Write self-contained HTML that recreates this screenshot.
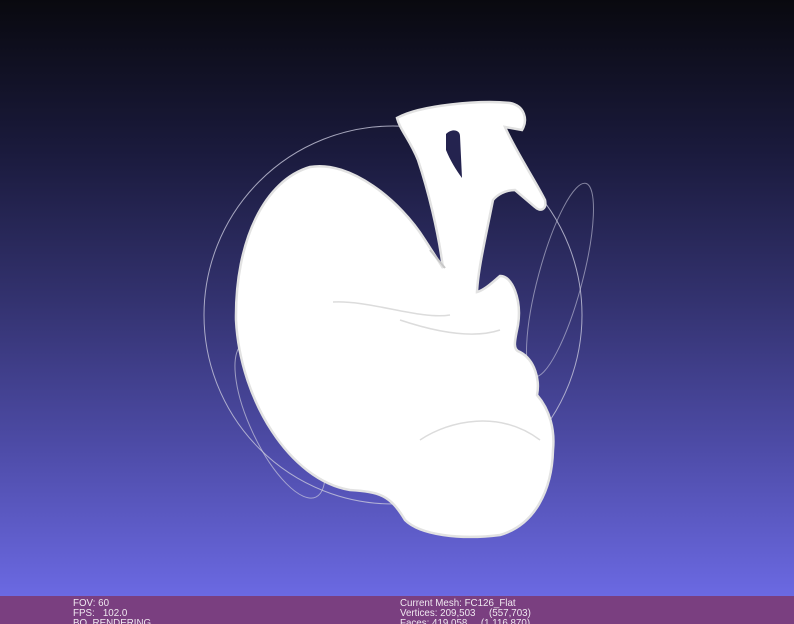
<!DOCTYPE html>
<html><head><style>
html,body{margin:0;padding:0;width:794px;height:624px;overflow:hidden;}
body{background:linear-gradient(to bottom,#09090f 0px,#1a1a3c 150px,#33326f 300px,#4e4ca8 450px,#6b69e2 596px);position:relative;font-family:"Liberation Sans",sans-serif;}
.bar{position:absolute;left:0;top:596px;width:794px;height:28px;background:#7a3f80;color:#f0e8f0;font-size:10.5px;line-height:10px;}
.c{position:absolute;top:2px;transform:scaleX(0.93);transform-origin:left;white-space:pre;}
</style></head><body>
<svg width="794" height="596" style="position:absolute;left:0;top:0">
<circle cx="393" cy="315" r="189" fill="none" stroke="#c8c8dc" stroke-width="1" opacity="0.8"/>
<ellipse cx="280" cy="420" rx="30" ry="85" transform="rotate(-25 280 420)" fill="none" stroke="#c8c8dc" stroke-width="1" opacity="0.7"/>
<ellipse cx="560" cy="280" rx="22" ry="100" transform="rotate(15 560 280)" fill="none" stroke="#c8c8dc" stroke-width="1" opacity="0.6"/>
<path d="M397,118 C420,105 480,100 510,103 C525,106 528,120 522,130 L505,127 C515,150 535,180 545,200 C547,210 540,212 535,207 L515,190 C505,190 497,195 493,200 C485,240 478,270 477,292 C485,290 495,280 500,276 C512,275 522,300 518,325 C515,340 512,350 520,352 C535,360 540,380 537,395 C550,410 555,430 553,450 C552,490 535,525 500,535 C460,540 420,535 405,520 C390,495 380,492 350,490 C290,480 240,400 236,320 C235,240 265,180 310,167 C350,160 400,200 425,240 L443,268 C438,230 428,190 418,160 C410,140 400,130 397,118 Z" fill="#ffffff" stroke="#e2e2e2" stroke-width="2.5"/>
<path d="M446,134 C452,128 460,130 460,136 L462,178 C456,170 450,160 446,150 Z" fill="#24234f"/>
<path d="M333,302 C370,300 420,320 450,315 M400,320 C430,330 470,340 500,330 M420,440 C450,420 500,410 540,440" fill="none" stroke="#dcdcdc" stroke-width="1.5"/>
<path d="M430,250 L445,268" stroke="#c8c8c8" stroke-width="2"/>
</svg>
<div class="bar">
<div class="c" style="left:73px">FOV: 60
FPS:   102.0
BO_RENDERING</div>
<div class="c" style="left:400px">Current Mesh: FC126_Flat
Vertices: 209,503     (557,703)
Faces: 419,058     (1,116,870)</div>
</div>
</body></html>
